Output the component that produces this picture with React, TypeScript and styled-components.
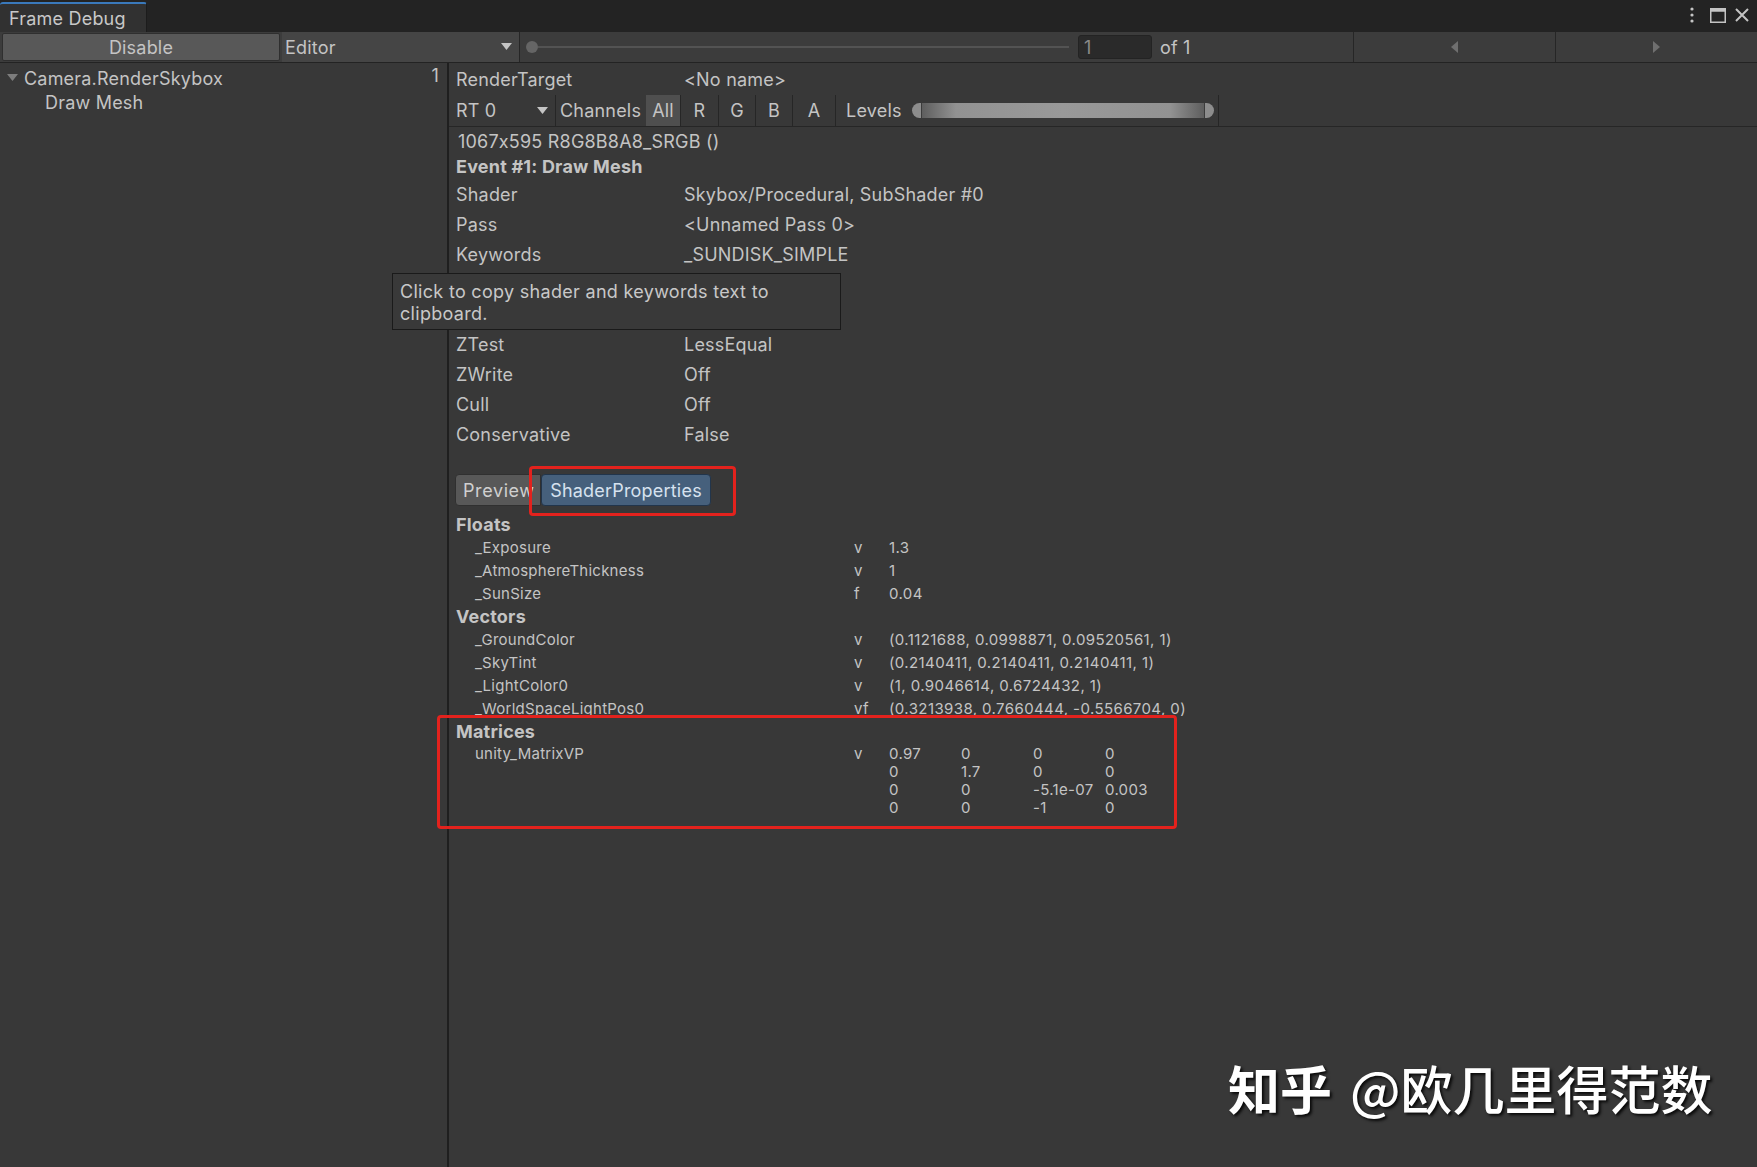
import React from 'react';
import styled, { createGlobalStyle } from 'styled-components';

const Global = createGlobalStyle`
  html, body { margin: 0; padding: 0; background: #383838; }
  body {
    font-family: Inter, "Noto Sans", "Liberation Sans", sans-serif;
    color: #c4c4c4;
    font-feature-settings: "calt" 0;
    letter-spacing: 0.2px;
  }
  * { box-sizing: border-box; }
`;

const Window = styled.div`
  position: relative;
  width: 1757px;
  height: 1167px;
  display: flex;
  flex-direction: column;
  background: #383838;
  font-size: 18px;
`;

/* ---------- tab bar ---------- */
const TabBar = styled.div`
  height: 32px;
  flex-shrink: 0;
  background: #232323;
  display: flex;
  align-items: flex-end;
  justify-content: space-between;
`;

const Tab = styled.div`
  width: 147px;
  height: 30px;
  background: #313131;
  border-top: 2px solid #3a79bb;
  border-top-left-radius: 3px;
  border-top-right-radius: 3px;
  border-right: 1px solid #1c1c1c;
  padding-left: 9px;
  display: flex;
  align-items: center;
  font-size: 18px;
  color: #c8c8c8;
`;

const WindowControls = styled.div`
  align-self: center;
  display: flex;
  align-items: center;
  padding-right: 8px;
  margin-bottom: 2px;
`;

const ControlSlot = styled.span<{ $gap: number }>`
  display: inline-flex;
  margin-left: ${p => p.$gap}px;
`;

/* ---------- toolbar ---------- */
const Toolbar = styled.div`
  height: 31px;
  flex-shrink: 0;
  background: #3c3c3c;
  border-bottom: 1px solid #232323;
  display: flex;
  align-items: stretch;
`;

const DisableButton = styled.div`
  width: 278px;
  margin: 1px 2px 1px 2px;
  background: #585858;
  border: 1px solid #2f2f2f;
  border-radius: 2px;
  display: flex;
  align-items: center;
  justify-content: center;
  color: #c4c4c4;
`;

const Dropdown = styled.div<{ $w: number; $pad?: number }>`
  width: ${p => p.$w}px;
  flex-shrink: 0;
  display: flex;
  align-items: center;
  justify-content: space-between;
  padding-left: ${p => p.$pad ?? 3}px;
  padding-right: 7px;
  border-right: 1px solid #262626;
`;

const EditorDropdown = styled(Dropdown)`
  background: #454545;
`;

const SliderArea = styled.div`
  width: 834px;
  flex-shrink: 0;
  display: flex;
  align-items: center;
  padding-left: 6px;
  border-right: 1px solid #262626;
`;

const Knob = styled.div`
  width: 12px;
  height: 12px;
  border-radius: 50%;
  background: #656565;
  flex-shrink: 0;
`;

const Track = styled.div`
  flex: 1;
  height: 2px;
  background: #535353;
  margin-right: 9px;
`;

const NumberField = styled.div`
  width: 74px;
  height: 24px;
  background: #2a2a2a;
  border: 1px solid #232323;
  border-radius: 3px;
  padding-left: 5px;
  display: flex;
  align-items: center;
  color: #8a8a8a;
`;

const OfLabel = styled.div`
  width: 201px;
  padding-left: 8px;
  color: #c4c4c4;
`;

const NavButton = styled.div<{ $last?: boolean }>`
  flex: 1;
  display: flex;
  align-items: center;
  justify-content: center;
  border-right: ${p => (p.$last ? 'none' : '1px solid #262626')};
`;

/* ---------- body ---------- */
const Body = styled.div`
  flex: 1;
  display: flex;
  min-height: 0;
`;

const LeftPanel = styled.div`
  width: 449px;
  flex-shrink: 0;
  border-right: 2px solid #1f1f1f;
  padding-top: 3px;
`;

const TreeRow = styled.div<{ $indent: number }>`
  height: 24px;
  display: flex;
  align-items: center;
  padding-left: ${p => p.$indent}px;
  padding-right: 8px;
  white-space: nowrap;
`;

const TreeArrow = styled.span`
  width: 17px;
  display: inline-flex;
  align-items: center;
`;

const TreeCount = styled.span`
  margin-left: auto;
  align-self: flex-start;
  line-height: 20px;
`;

const RightPanel = styled.div`
  flex: 1;
  display: flex;
  flex-direction: column;
  position: relative;
`;

const InfoRow = styled.div<{ $h: number; $pad?: number }>`
  height: ${p => p.$h}px;
  display: flex;
  align-items: center;
  padding-left: ${p => p.$pad ?? 7}px;
  white-space: nowrap;
`;

const Spacer = styled.div<{ $h: number }>`
  height: ${p => p.$h}px;
`;

const Label = styled.span`
  width: 228px;
  flex-shrink: 0;
`;

const BoldText = styled.span`
  font-weight: 700;
`;

const ChannelBar = styled.div`
  height: 32px;
  display: flex;
  align-items: stretch;
  border-bottom: 1px solid #262626;
`;

const ChannelsLabel = styled.div`
  width: 90px;
  padding-left: 4px;
  display: flex;
  align-items: center;
`;

const ChannelButton = styled.div<{ $w: number; $active?: boolean }>`
  width: ${p => p.$w}px;
  display: flex;
  align-items: center;
  justify-content: center;
  background: ${p => (p.$active ? '#4f4f4f' : 'transparent')};
  border-right: 1px solid #262626;
`;

const LevelsGroup = styled.div`
  width: 383px;
  display: flex;
  align-items: center;
  padding-left: 10px;
  border-right: 1px solid #262626;
`;

const LevelsLabel = styled.span`
  width: 66px;
`;

const LevelsBar = styled.div`
  width: 302px;
  height: 15px;
  border-radius: 8px;
  background: #8d8d8d;
  padding: 0 9px;
  display: flex;
`;

const LevelsFill = styled.div`
  flex: 1;
  background: linear-gradient(90deg, #5e5e5e 0%, #929292 12%, #999 50%, #929292 88%, #5e5e5e 100%);
  border-left: 1px solid #3c3c3c;
  border-right: 1px solid #3c3c3c;
`;

const Details = styled.div`
  padding-top: 1px;
`;

const Tooltip = styled.div`
  position: absolute;
  left: 392px;
  top: 273px;
  width: 449px;
  height: 57px;
  background: #393939;
  border: 1px solid #1a1a1a;
  padding: 7px 0 0 7px;
  line-height: 22px;
  font-size: 18px;
  letter-spacing: 0.3px;
  color: #c8c8c8;
  z-index: 5;
`;

const TabsRow = styled.div`
  position: relative;
  margin-top: 25px;
  margin-left: 6px;
  height: 32px;
  display: flex;
`;

const PreviewTab = styled.div`
  width: 86px;
  background: #585858;
  border: 1px solid #303030;
  border-radius: 4px 0 0 4px;
  padding-left: 7px;
  display: flex;
  align-items: center;
  overflow: hidden;
  white-space: nowrap;
  color: #d0d0d0;
  letter-spacing: 0.6px;
`;

const ShaderTab = styled.div`
  width: 170px;
  background: #46607c;
  border: 1px solid #22354b;
  border-radius: 4px;
  display: flex;
  align-items: center;
  justify-content: center;
  color: #d6e2ef;
`;

const RedBox = styled.div<{ $l: number; $t: number; $w: number; $h: number }>`
  position: absolute;
  left: ${p => p.$l}px;
  top: ${p => p.$t}px;
  width: ${p => p.$w}px;
  height: ${p => p.$h}px;
  border: 3px solid #e3221d;
  border-radius: 4px;
  pointer-events: none;
  z-index: 4;
`;

const Props = styled.div`
  margin-top: 7px;
  padding-left: 7px;
`;

const SectionHeader = styled.div`
  height: 23px;
  display: flex;
  align-items: center;
  font-weight: 700;
  font-size: 18px;
`;

const PropRow = styled.div<{ $matrix?: boolean }>`
  display: grid;
  grid-template-columns: 19px 379px 35px auto;
  height: ${p => (p.$matrix ? 'auto' : '23px')};
  align-items: ${p => (p.$matrix ? 'start' : 'center')};
  padding-top: ${p => (p.$matrix ? 2 : 0)}px;
  line-height: 18px;
  font-size: 15px;
  letter-spacing: 0.25px;
  white-space: nowrap;
  color: #c4c4c4;
`;

const PropValue = styled.span`
  letter-spacing: 0.4px;
`;

const MatrixSection = styled.div`
  position: relative;
`;

const MatrixGrid = styled.div`
  display: grid;
  grid-template-columns: repeat(4, 72px);
  line-height: 18px;
  letter-spacing: 0.3px;
`;

const Watermark = styled.div`
  position: absolute;
  left: 1228px;
  top: 1058px;
  font-family: "Noto Sans CJK SC", "Noto Sans", sans-serif;
  font-size: 52px;
  line-height: 60px;
  letter-spacing: 0;
  color: #ffffff;
  font-weight: 500;
  text-shadow: 2px 2px 3px rgba(0, 0, 0, 0.85);
  white-space: nowrap;
  z-index: 6;
`;

const Strong = styled.span`
  font-weight: 700;
  margin-right: 18px;
`;

/* ---------- icons ---------- */
const DownArrow = ({ color = '#c4c4c4' }: { color?: string }) => (
  <svg width="11" height="8" viewBox="0 0 11 8">
    <polygon points="0,0 11,0 5.5,7" fill={color} />
  </svg>
);

const SideArrow = ({ dir }: { dir: 'left' | 'right' }) => (
  <svg width="7" height="12" viewBox="0 0 7 12">
    {dir === 'left' ? (
      <polygon points="7,0 7,12 0,6" fill="#6f6f6f" />
    ) : (
      <polygon points="0,0 0,12 7,6" fill="#6f6f6f" />
    )}
  </svg>
);

const Kebab = () => (
  <svg width="4" height="16" viewBox="0 0 4 16">
    <circle cx="2" cy="2" r="1.6" fill="#c4c4c4" />
    <circle cx="2" cy="8" r="1.6" fill="#c4c4c4" />
    <circle cx="2" cy="14" r="1.6" fill="#c4c4c4" />
  </svg>
);

const Maximize = () => (
  <svg width="16" height="15" viewBox="0 0 16 15">
    <rect x="0.75" y="0.75" width="14.5" height="13.5" fill="none" stroke="#c4c4c4" strokeWidth="1.5" />
    <rect x="0.75" y="0.75" width="14.5" height="3" fill="#c4c4c4" />
  </svg>
);

const CloseIcon = () => (
  <svg width="14" height="14" viewBox="0 0 14 14">
    <path d="M1 1 L13 13 M13 1 L1 13" stroke="#c4c4c4" strokeWidth="2" />
  </svg>
);

/* ---------- data ---------- */
const detailsTop: [string, string][] = [
  ['Shader', 'Skybox/Procedural, SubShader #0'],
  ['Pass', '<Unnamed Pass 0>'],
  ['Keywords', '_SUNDISK_SIMPLE'],
];

const detailsBottom: [string, string][] = [
  ['ZTest', 'LessEqual'],
  ['ZWrite', 'Off'],
  ['Cull', 'Off'],
  ['Conservative', 'False'],
];

const floats: [string, string, string][] = [
  ['_Exposure', 'v', '1.3'],
  ['_AtmosphereThickness', 'v', '1'],
  ['_SunSize', 'f', '0.04'],
];

const vectors: [string, string, string][] = [
  ['_GroundColor', 'v', '(0.1121688, 0.0998871, 0.09520561, 1)'],
  ['_SkyTint', 'v', '(0.2140411, 0.2140411, 0.2140411, 1)'],
  ['_LightColor0', 'v', '(1, 0.9046614, 0.6724432, 1)'],
  ['_WorldSpaceLightPos0', 'vf', '(0.3213938, 0.7660444, -0.5566704, 0)'],
];

const matrix = [
  ['0.97', '0', '0', '0'],
  ['0', '1.7', '0', '0'],
  ['0', '0', '-5.1e-07', '0.003'],
  ['0', '0', '-1', '0'],
];

const channels: { name: string; w: number; active?: boolean }[] = [
  { name: 'All', w: 35, active: true },
  { name: 'R', w: 38 },
  { name: 'G', w: 37 },
  { name: 'B', w: 37 },
  { name: 'A', w: 43 },
];

const PropLine = ({ n, t, v }: { n: string; t: string; v: string }) => (
  <PropRow>
    <span />
    <span>{n}</span>
    <span>{t}</span>
    <PropValue>{v}</PropValue>
  </PropRow>
);

export default function App() {
  return (
    <Window>
      <Global />
      <TabBar>
        <Tab>Frame Debug</Tab>
        <WindowControls>
          <Kebab />
          <ControlSlot $gap={16}>
            <Maximize />
          </ControlSlot>
          <ControlSlot $gap={9}>
            <CloseIcon />
          </ControlSlot>
        </WindowControls>
      </TabBar>

      <Toolbar>
        <DisableButton>Disable</DisableButton>
        <EditorDropdown $w={238}>
          <span>Editor</span>
          <DownArrow />
        </EditorDropdown>
        <SliderArea>
          <Knob />
          <Track />
          <NumberField>1</NumberField>
          <OfLabel>of 1</OfLabel>
        </SliderArea>
        <NavButton>
          <SideArrow dir="left" />
        </NavButton>
        <NavButton $last>
          <SideArrow dir="right" />
        </NavButton>
      </Toolbar>

      <Body>
        <LeftPanel>
          <TreeRow $indent={7}>
            <TreeArrow>
              <DownArrow color="#7d7d7d" />
            </TreeArrow>
            <span>Camera.RenderSkybox</span>
            <TreeCount>1</TreeCount>
          </TreeRow>
          <TreeRow $indent={45}>
            <span>Draw Mesh</span>
          </TreeRow>
        </LeftPanel>

        <RightPanel>
          <InfoRow $h={32}>
            <Label>RenderTarget</Label>
            <span>&lt;No name&gt;</span>
          </InfoRow>
          <ChannelBar>
            <Dropdown $w={107} $pad={7}>
              <span>RT 0</span>
              <DownArrow />
            </Dropdown>
            <ChannelsLabel>Channels</ChannelsLabel>
            {channels.map(c => (
              <ChannelButton key={c.name} $w={c.w} $active={c.active}>
                {c.name}
              </ChannelButton>
            ))}
            <LevelsGroup>
              <LevelsLabel>Levels</LevelsLabel>
              <LevelsBar>
                <LevelsFill />
              </LevelsBar>
            </LevelsGroup>
          </ChannelBar>

          <Details>
            <InfoRow $h={26} $pad={9}>1067x595 R8G8B8A8_SRGB ()</InfoRow>
            <InfoRow $h={25}>
              <BoldText>Event #1: Draw Mesh</BoldText>
            </InfoRow>
            {detailsTop.map(([l, v]) => (
              <InfoRow key={l} $h={30}>
                <Label>{l}</Label>
                <span>{v}</span>
              </InfoRow>
            ))}
            <Spacer $h={60} />
            {detailsBottom.map(([l, v]) => (
              <InfoRow key={l} $h={30}>
                <Label>{l}</Label>
                <span>{v}</span>
              </InfoRow>
            ))}
          </Details>

          <TabsRow>
            <PreviewTab>Preview</PreviewTab>
            <ShaderTab>ShaderProperties</ShaderTab>
            <RedBox $l={74} $t={-8} $w={207} $h={50} />
          </TabsRow>

          <Props>
            <SectionHeader>Floats</SectionHeader>
            {floats.map(([n, t, v]) => (
              <PropLine key={n} n={n} t={t} v={v} />
            ))}
            <SectionHeader>Vectors</SectionHeader>
            {vectors.map(([n, t, v]) => (
              <PropLine key={n} n={n} t={t} v={v} />
            ))}
            <MatrixSection>
              <SectionHeader>Matrices</SectionHeader>
              <PropRow $matrix>
                <span />
                <span>unity_MatrixVP</span>
                <span>v</span>
                <MatrixGrid>
                  {matrix.flat().map((m, i) => (
                    <span key={i}>{m}</span>
                  ))}
                </MatrixGrid>
              </PropRow>
              <RedBox $l={-19} $t={-5} $w={740} $h={114} />
            </MatrixSection>
          </Props>
        </RightPanel>
      </Body>

      <Tooltip>
        Click to copy shader and keywords text to
        <br />
        clipboard.
      </Tooltip>

      <Watermark>
        <Strong>知乎</Strong>@欧几里得范数
      </Watermark>
    </Window>
  );
}
